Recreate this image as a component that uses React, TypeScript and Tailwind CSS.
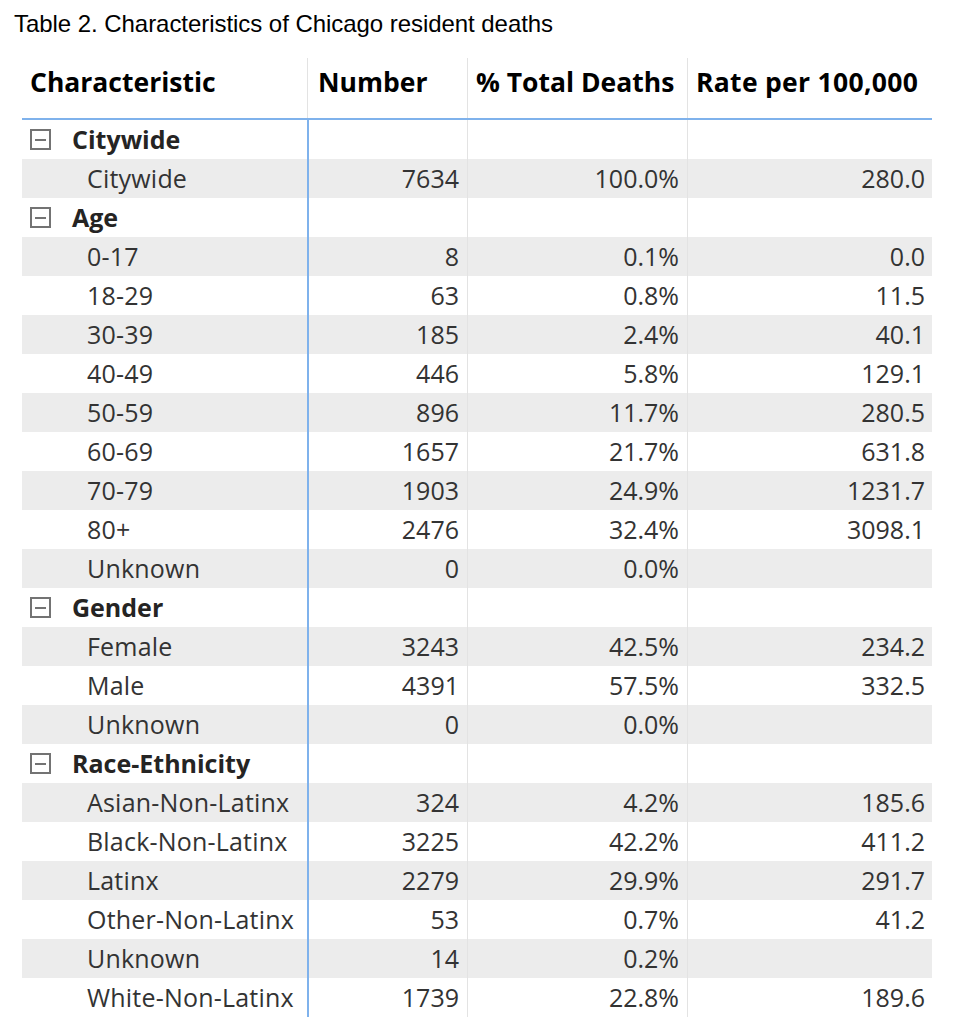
import React from 'react';

type Row = { label: string; number: string; pct: string; rate: string };
type Group = { name: string; rows: Row[] };

const groups: Group[] = [
  { name: 'Citywide', rows: [{ label: 'Citywide', number: '7634', pct: '100.0%', rate: '280.0' }] },
  {
    name: 'Age',
    rows: [
      { label: '0-17', number: '8', pct: '0.1%', rate: '0.0' },
      { label: '18-29', number: '63', pct: '0.8%', rate: '11.5' },
      { label: '30-39', number: '185', pct: '2.4%', rate: '40.1' },
      { label: '40-49', number: '446', pct: '5.8%', rate: '129.1' },
      { label: '50-59', number: '896', pct: '11.7%', rate: '280.5' },
      { label: '60-69', number: '1657', pct: '21.7%', rate: '631.8' },
      { label: '70-79', number: '1903', pct: '24.9%', rate: '1231.7' },
      { label: '80+', number: '2476', pct: '32.4%', rate: '3098.1' },
      { label: 'Unknown', number: '0', pct: '0.0%', rate: '' },
    ],
  },
  {
    name: 'Gender',
    rows: [
      { label: 'Female', number: '3243', pct: '42.5%', rate: '234.2' },
      { label: 'Male', number: '4391', pct: '57.5%', rate: '332.5' },
      { label: 'Unknown', number: '0', pct: '0.0%', rate: '' },
    ],
  },
  {
    name: 'Race-Ethnicity',
    rows: [
      { label: 'Asian-Non-Latinx', number: '324', pct: '4.2%', rate: '185.6' },
      { label: 'Black-Non-Latinx', number: '3225', pct: '42.2%', rate: '411.2' },
      { label: 'Latinx', number: '2279', pct: '29.9%', rate: '291.7' },
      { label: 'Other-Non-Latinx', number: '53', pct: '0.7%', rate: '41.2' },
      { label: 'Unknown', number: '14', pct: '0.2%', rate: '' },
      { label: 'White-Non-Latinx', number: '1739', pct: '22.8%', rate: '189.6' },
    ],
  },
];

const cols = 'grid grid-cols-[285px_160px_220px_245px]';

const CollapseBox: React.FC = () => (
  <span className="w-[21px] h-[21px] shrink-0 border-2 border-[#737373] flex items-center justify-center mr-[21px] bg-white">
    <span className="w-[11px] h-[2px] bg-[#737373]" />
  </span>
);

const App: React.FC = () => {
  return (
    <div className="min-h-screen bg-white">
      <div className="pt-[10px] pl-[14px] text-[24px] leading-[28px] text-black tracking-[-0.05px]" style={{ fontFamily: '"Liberation Sans", Arial, sans-serif' }}>
        Table 2. Characteristics of Chicago resident deaths
      </div>

      <div className="ml-[22px] mt-[20px] w-[910px] font-['Open_Sans',sans-serif]">
        {/* Header */}
        <div className={`${cols} h-[62px] border-b-2 border-[#7fb2ec] text-black font-bold text-[26.5px] whitespace-nowrap`}>
          <div className="flex items-center pl-[8px] pb-[10px]">Characteristic</div>
          <div className="flex items-center pl-[10px] pb-[10px] border-l border-[#e3e3e3]">Number</div>
          <div className="flex items-center pl-[8px] pb-[10px] border-l border-[#e3e3e3]">% Total Deaths</div>
          <div className="flex items-center pl-[8px] pb-[10px] border-l border-[#e3e3e3] tracking-[0.3px]">Rate per 100,000</div>
        </div>

        {/* Body */}
        {groups.map(group => (
          <React.Fragment key={group.name}>
            <div className={`${cols} h-[39px] text-[#252423]`}>
              <div className="flex items-center pl-[8px] font-bold text-[25px] whitespace-nowrap">
                <CollapseBox />
                {group.name}
              </div>
              <div className="border-l-2 border-[#7fb2ec]" />
              <div className="border-l border-[#e3e3e3]" />
              <div className="border-l border-[#e3e3e3]" />
            </div>
            {group.rows.map((row, i) => (
              <div
                key={group.name + row.label}
                className={`${cols} h-[39px] text-[#333333] text-[25px] whitespace-nowrap ${i % 2 === 0 ? 'bg-[#ececec]' : 'bg-white'}`}
              >
                <div className="flex items-center pl-[65px] tracking-[0.2px]">{row.label}</div>
                <div className="flex items-center justify-end pr-[8px] border-l-2 border-[#7fb2ec]">{row.number}</div>
                <div className="flex items-center justify-end pr-[8px] border-l border-[#e3e3e3]">{row.pct}</div>
                <div className="flex items-center justify-end pr-[7px] border-l border-[#e3e3e3]">{row.rate}</div>
              </div>
            ))}
          </React.Fragment>
        ))}
      </div>
    </div>
  );
};

export default App;
